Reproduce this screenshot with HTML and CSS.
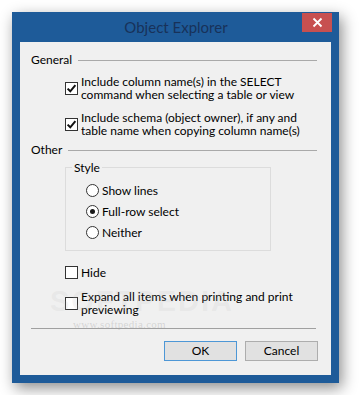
FILE: index.html
```html
<!DOCTYPE html>
<html>

<head>
    <title>Object Explorer</title>
    <meta name="viewport" content="width=device-width, initial-scale=1.0">
    <link rel="stylesheet" href="styles.css">
</head>

<body>
    <div class="window">
        <div class="title-bar">
            <div></div>
            <div class="title">Object Explorer</div>
            <div class="close-button">
                <svg width="11" height="11" viewBox="0 0 11 11">
                    <path d="M1.5 1.5 L9.5 9.5 M9.5 1.5 L1.5 9.5" stroke="#fff" stroke-width="1.8" />
                </svg>
            </div>
        </div>

        <div class="client">
            <div class="section-head first">
                <span>General</span>
                <div class="rule"></div>
            </div>

            <div class="option two-line first-option">
                <span class="checkbox">
                    <svg width="11" height="11" viewBox="0 0 11 11">
                        <path d="M1.6 5.6 L4.3 8.3 L9.4 2.2" fill="none" stroke="#111" stroke-width="2" />
                    </svg>
                </span>
                <span class="label">Include column name(s) in the SELECT<br>command when selecting a table or view</span>
            </div>
            <div class="option two-line">
                <span class="checkbox">
                    <svg width="11" height="11" viewBox="0 0 11 11">
                        <path d="M1.6 5.6 L4.3 8.3 L9.4 2.2" fill="none" stroke="#111" stroke-width="2" />
                    </svg>
                </span>
                <span class="label">Include schema (object owner), if any and<br>table name when copying column name(s)</span>
            </div>

            <div class="section-head other">
                <span>Other</span>
                <div class="rule"></div>
            </div>

            <div class="group">
                <div class="group-title">Style</div>
                <div class="radio-row first-radio">
                    <span class="radio"></span>
                    <span>Show lines</span>
                </div>
                <div class="radio-row">
                    <span class="radio checked"></span>
                    <span>Full-row select</span>
                </div>
                <div class="radio-row">
                    <span class="radio"></span>
                    <span>Neither</span>
                </div>
            </div>

            <div class="option hide-option">
                <span class="checkbox"></span>
                <span class="label">Hide</span>
            </div>
            <div class="option two-line expand-option">
                <span class="checkbox"></span>
                <span class="label">Expand all items when printing and print<br>previewing</span>
            </div>

            <div class="separator"></div>

            <div class="buttons">
                <div class="button default">OK</div>
                <div class="button">Cancel</div>
            </div>

            <!-- watermark of the screenshot site -->
            <div class="watermark-big">SOFTPEDIA</div>
            <div class="watermark-small">www.softpedia.com</div>
        </div>
    </div>
</body>

</html>
```

FILE: styles.css
```css
body {
    margin: 0;
    padding: 12px;
    background-color: #ffffff;
    font-family: Lato, "Liberation Sans", sans-serif;
    font-size: 12px;
    color: #000000;
}

.window {
    width: 327px;
    height: 371px;
    box-sizing: border-box;
    background-color: #1e5b99;
    padding: 0 8px 8px 8px;
    box-shadow: 3px 5px 14px rgba(0, 0, 0, 0.45);
}

.title-bar {
    height: 30px;
    display: grid;
    grid-template-columns: 1fr auto 1fr;
    align-items: start;
    margin-right: -1px;
}

.title {
    font-size: 15px;
    line-height: 30px;
    color: #183259;
}

.close-button {
    justify-self: end;
    width: 30px;
    height: 19px;
    margin-top: 1px;
    background-color: #c75050;
    display: flex;
    align-items: center;
    justify-content: center;
}

.client {
    position: relative;
    height: 333px;
    box-sizing: border-box;
    background-color: #f0f0f0;
    padding: 0 14px 0 11px;
    overflow: hidden;
}

.section-head {
    display: flex;
    align-items: center;
    height: 13px;
    line-height: 13px;
    gap: 6px;
}

.section-head.first {
    padding-top: 11px;
}

.section-head.other {
    margin-top: 6px;
}

.rule {
    flex: 1;
    border-top: 1px solid #a9a9a9;
    margin-top: 1px;
}

.option {
    display: flex;
    align-items: center;
    gap: 3px;
    margin-left: 34px;
    line-height: 13px;
}

.option.two-line {
    margin-top: 10px;
}

.option.first-option {
    margin-top: 9px;
}

.hide-option {
    margin-top: 15px;
}

.option.expand-option {
    margin-top: 11px;
}

.checkbox {
    width: 13px;
    height: 13px;
    box-sizing: border-box;
    border: 1px solid #333333;
    background-color: #ffffff;
    display: flex;
    align-items: center;
    justify-content: center;
    flex-shrink: 0;
}

.group {
    margin: 11px 0 0 34px;
    width: 206px;
    height: 84px;
    box-sizing: border-box;
    border: 1px solid #dcdcdc;
}

.group-title {
    display: table;
    margin: -7px 0 0 6px;
    padding: 0 2px;
    background-color: #f0f0f0;
    line-height: 13px;
}

.radio-row {
    display: flex;
    align-items: center;
    gap: 3px;
    margin: 8px 0 0 20px;
    line-height: 13px;
}

.radio-row.first-radio {
    margin-top: 10px;
}

.radio {
    width: 13px;
    height: 13px;
    box-sizing: border-box;
    border: 1px solid #333333;
    border-radius: 50%;
    background-color: #ffffff;
    display: flex;
    align-items: center;
    justify-content: center;
}

.radio.checked::after {
    content: "";
    width: 5px;
    height: 5px;
    border-radius: 50%;
    background-color: #1a1a1a;
}

.separator {
    margin-top: 12px;
    border-top: 1px solid #a0a0a0;
    margin-right: 1px;
}

.buttons {
    display: flex;
    justify-content: flex-end;
    gap: 8px;
    margin-top: 12px;
    margin-right: -1px;
}

.button {
    width: 73px;
    height: 20px;
    box-sizing: border-box;
    border: 1px solid #adadad;
    background-color: #e1e1e1;
    text-align: center;
    line-height: 18px;
}

.button.default {
    border-color: #4d97d6;
}

.watermark-big {
    position: absolute;
    left: 30px;
    top: 243px;
    font-family: "Liberation Sans", sans-serif;
    font-size: 29px;
    font-weight: bold;
    letter-spacing: 2px;
    color: rgba(190, 190, 190, 0.16);
    pointer-events: none;
}

.watermark-small {
    position: absolute;
    left: 53px;
    top: 276px;
    font-family: "Liberation Serif", serif;
    font-size: 11px;
    letter-spacing: 0.3px;
    color: rgba(160, 160, 160, 0.35);
    pointer-events: none;
}
```
